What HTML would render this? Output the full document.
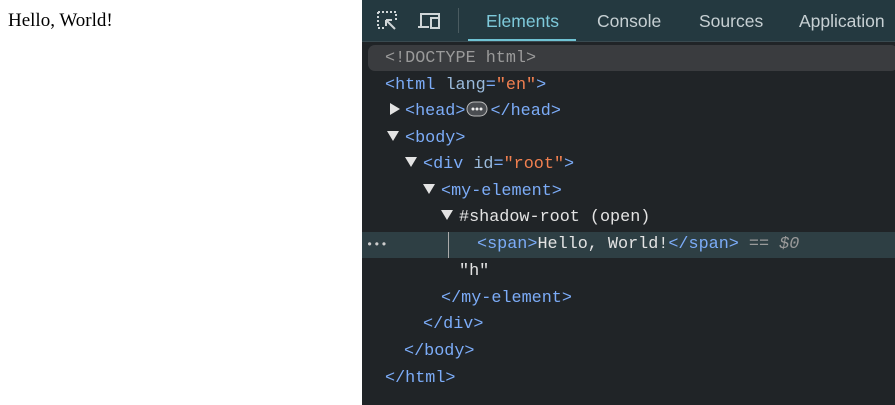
<!DOCTYPE html>
<html><head><style>
body{margin:0;width:895px;height:405px;overflow:hidden;background:#fff;position:relative;font-family:"Liberation Serif",serif;}
.hello{position:absolute;left:8px;top:10px;font-size:19px;color:#000;}
.dt{position:absolute;left:362px;top:0;width:533px;height:405px;background:#202427;}
.tb{position:absolute;left:0;top:0;width:533px;height:41px;background:#243940;border-bottom:1px solid #394a50;}
.tab{position:absolute;top:11px;font-family:"Liberation Sans",sans-serif;font-size:17.5px;color:#c7d0d3;}
.ul{position:absolute;left:106px;top:39px;width:108px;height:2px;background:#6fc3d4;}
.row{position:absolute;left:0;width:533px;height:26px;font-family:"Liberation Mono",monospace;font-size:16.8px;line-height:26px;color:#e3e3e3;white-space:pre;}
.t{color:#7cacf8}.a{color:#9bbbdc}.v{color:#f18050}.g{color:#9a9a9a}
.tri{display:inline-block;width:0;height:0;border-left:6px solid transparent;border-right:6px solid transparent;border-top:10px solid #e3e3e3;margin-right:6px;vertical-align:1px}
.trr{display:inline-block;width:0;height:0;border-top:6px solid transparent;border-bottom:6px solid transparent;border-left:10px solid #e3e3e3;margin-right:5px;vertical-align:0px}
</style></head><body>
<div class="hello">Hello, World!</div>
<div class="dt">
<div class="tb">
<svg style="position:absolute;left:14px;top:10px" width="24" height="22" viewBox="0 0 24 22"><path d="M2 2h18v8M2 2v16h6" stroke="#d0d6d8" stroke-width="2" stroke-dasharray="2 2" fill="none"/><path d="M10 10l9 9M10 10h6M10 10v6" stroke="#d0d6d8" stroke-width="2" fill="none"/></svg>
<svg style="position:absolute;left:55px;top:10px" width="26" height="22" viewBox="0 0 26 22"><path d="M4 16V4h18v3M1 17h11" stroke="#d0d6d8" stroke-width="2" fill="none"/><rect x="14" y="8" width="8" height="10" stroke="#d0d6d8" stroke-width="2" fill="none"/></svg>
<div style="position:absolute;left:96px;top:8px;width:1px;height:25px;background:#4a5b60"></div>
<div class="tab" style="left:124px;color:#7ecadb">Elements</div>
<div class="tab" style="left:235px">Console</div>
<div class="tab" style="left:337px">Sources</div>
<div class="tab" style="left:437px">Application</div>
<div class="ul"></div>
</div>
<div style="position:absolute;left:6px;top:45px;width:530px;height:26px;background:#3a3c3f;border-radius:7px"></div>
<div class="row" style="top:46px;left:23px;color:#9a9a9a">&lt;!DOCTYPE html&gt;</div>
<div class="row" style="top:73px;left:23px"><span class="t">&lt;html </span><span class="a">lang</span><span class="t">=</span><span class="v">"en"</span><span class="t">&gt;</span></div>
<div class="row" style="top:99px;left:28px"><span class="trr"></span><span class="t">&lt;head&gt;</span><svg width="22" height="16" viewBox="0 0 22 16" style="vertical-align:-2px;margin:0 2px 0 1px"><rect x="1" y="1" width="20" height="14" rx="7" fill="#4a4d51" stroke="#bbb" stroke-width="1"/><circle cx="7" cy="8" r="1.5" fill="#eee"/><circle cx="11" cy="8" r="1.5" fill="#eee"/><circle cx="15" cy="8" r="1.5" fill="#eee"/></svg><span class="t">&lt;/head&gt;</span></div>
<div class="row" style="top:126px;left:25px"><span class="tri"></span><span class="t">&lt;body&gt;</span></div>
<div class="row" style="top:152px;left:43px"><span class="tri"></span><span class="t">&lt;div </span><span class="a">id</span><span class="t">=</span><span class="v">"root"</span><span class="t">&gt;</span></div>
<div class="row" style="top:179px;left:61px"><span class="tri"></span><span class="t">&lt;my-element&gt;</span></div>
<div class="row" style="top:205px;left:79px"><span class="tri"></span>#shadow-root (open)</div>
<div style="position:absolute;left:0;top:232px;width:533px;height:26px;background:#2e3f44"></div>
<div style="position:absolute;left:86px;top:232px;width:1px;height:26px;background:#aaa"></div>
<div class="row" style="top:232px;left:4px;color:#ccc;font-size:12px">•••</div>
<div class="row" style="top:232px;left:115px"><span class="t">&lt;span&gt;</span>Hello, World!<span class="t">&lt;/span&gt;</span><span class="g"> == <i>$0</i></span></div>
<div class="row" style="top:259px;left:97px">"h"</div>
<div class="row" style="top:286px;left:79px"><span class="t">&lt;/my-element&gt;</span></div>
<div class="row" style="top:312px;left:61px"><span class="t">&lt;/div&gt;</span></div>
<div class="row" style="top:339px;left:42px"><span class="t">&lt;/body&gt;</span></div>
<div class="row" style="top:366px;left:23px"><span class="t">&lt;/html&gt;</span></div>
</div>
</body></html>
